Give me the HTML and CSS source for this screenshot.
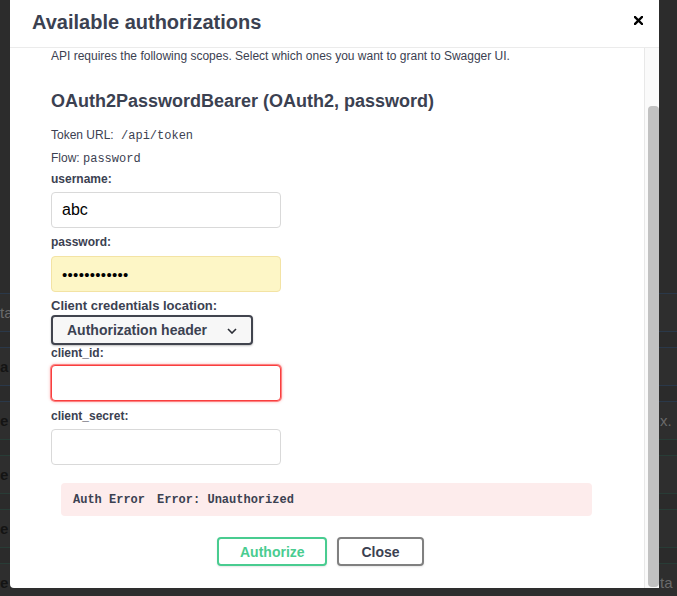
FILE: index.html
```html
<!DOCTYPE html>
<html lang="en">
<head>
<meta charset="utf-8">
<title>Available authorizations</title>
<link rel="stylesheet" href="styles.css">
</head>
<body>
<div class="page">
  <div class="row tall"><span class="lt dim">ta</span><span class="rt"></span></div>
  <div class="row short"></div>
  <div class="row tall"><span class="lt">a</span><span class="rt"></span></div>
  <div class="row short"></div>
  <div class="row tall"><span class="lt">e</span><span class="rt dim">x.</span></div>
  <div class="row short alt"></div>
  <div class="row tall alt"><span class="lt">e</span><span class="rt"></span></div>
  <div class="row short alt"></div>
  <div class="row tall alt"><span class="lt">e</span><span class="rt"></span></div>
  <div class="row short alt"></div>
  <div class="row tall alt"><span class="lt">e</span><span class="rt dim">ta</span></div>
</div>

<div class="modal">
  <div class="modal-header">
    <h3 class="modal-title">Available authorizations</h3>
    <button class="close-modal" aria-label="Close">
      <svg width="9" height="9" viewBox="0 0 9 9"><path d="M1 1 L8 8 M8 1 L1 8" stroke="#000" stroke-width="2.4" stroke-linecap="square" fill="none"/></svg>
    </button>
  </div>
  <div class="modal-body">
    <div class="modal-content">
      <p class="desc">API requires the following scopes. Select which ones you want to grant to Swagger UI.</p>
      <h4 class="scheme">OAuth2PasswordBearer (OAuth2, password)</h4>
      <p class="info first">Token URL: <code class="token">/api/token</code></p>
      <p class="info">Flow: <code>password</code></p>
      <label class="lbl l-user">username:</label>
      <div class="field">abc</div>
      <label class="lbl">password:</label>
      <div class="field autofill"><span class="dots">••••••••••••</span></div>
      <label class="lbl l-loc">Client credentials location:</label>
      <div class="select">
        <span>Authorization header</span>
        <svg width="10" height="6" viewBox="0 0 10 6"><path d="M1 1 L5 5 L9 1" stroke="#2b2e36" stroke-width="1.6" fill="none"/></svg>
      </div>
      <label class="lbl l-cid">client_id:</label>
      <div class="field invalid"></div>
      <label class="lbl l-sec">client_secret:</label>
      <div class="field"></div>
      <div class="errors"><b>Auth Error</b><b>Error: Unauthorized</b></div>
      <div class="btn-wrap">
        <button class="btn authorize">Authorize</button>
        <button class="btn close">Close</button>
      </div>
    </div>
    <div class="scrollbar"><div class="thumb"></div></div>
  </div>
</div>
</body>
</html>
```

FILE: styles.css
```css
* { box-sizing: border-box; }
html, body { margin: 0; padding: 0; }
body {
  width: 677px;
  height: 596px;
  overflow: hidden;
  background: #2c2c2c;
  font-family: "Liberation Sans", Arial, sans-serif;
  position: relative;
}

/* page behind the overlay */
.page {
  padding-top: 293px;
  display: flex;
  flex-direction: column;
}
.row {
  display: flex;
  justify-content: space-between;
  align-items: center;
  border-top: 1px solid #2a3849;
  background: #2e2e2e;
}
.row.alt { border-top-color: #283c36; }
.row.tall { height: 38px; }
.row.short { height: 16px; background: #2b2b2b; }
.lt, .rt {
  font-size: 15px;
  font-weight: bold;
  color: #141414;
  width: 18px;
  white-space: nowrap;
}
.rt { padding-left: 1px; }
.dim { font-weight: normal; color: #6a6a6a; }

/* modal */
.modal {
  position: absolute;
  left: 10px;
  top: 0;
  width: 649px;
  height: 588px;
  background: #fff;
  border-radius: 0 0 4px 4px;
  display: flex;
  flex-direction: column;
  color: #3b4151;
}
.modal-header {
  height: 48px;
  border-bottom: 1px solid #ebebeb;
  display: flex;
  align-items: center;
  justify-content: space-between;
  padding: 0 16px 3px 22px;
  flex: none;
}
.modal-title {
  margin: 0;
  font-size: 20px;
  font-weight: bold;
  color: #3b4151;
}
.close-modal {
  border: 0;
  background: none;
  padding: 0;
  width: 9px;
  height: 9px;
  display: flex;
  margin-bottom: 3px;
}
.modal-body {
  flex: 1;
  display: flex;
  min-height: 0;
}
.modal-content {
  flex: 1;
  padding: 1px 0 0 41px;
  display: flex;
  flex-direction: column;
  align-items: flex-start;
}
.scrollbar {
  width: 15px;
  flex: none;
  background: #fafafa;
  border-left: 1px solid #e8e8e8;
  padding: 58px 0 1px 3px;
  display: flex;
}
.thumb {
  width: 8px;
  flex: 1;
  background: #c1c1c1;
  border-radius: 4px;
}

.desc {
  margin: 0;
  font-size: 12px;
  line-height: 15px;
}
.scheme {
  margin: 26px 0 0;
  font-size: 18px;
  line-height: 22px;
  font-weight: bold;
}
.info {
  margin: 7px 0 0;
  font-size: 12px;
  line-height: 15px;
}
.info.first { margin-top: 16px; }
code {
  font-family: "Liberation Mono", "Courier New", monospace;
  font-size: 12px;
  color: #3b4151;
}
.token { margin-left: 4px; }

.lbl {
  display: block;
  font-size: 12px;
  line-height: 15px;
  font-weight: bold;
  margin: 7px 0 6px;
}
.l-user { margin: 5px 0 5px; }
.l-loc { font-size: 13px; margin: 6px 0 0; }
.l-cid { margin: 1px 0 4px; }
.l-sec { margin: 8px 0 5px; }

.field {
  width: 230px;
  height: 36px;
  border: 1px solid #d9d9d9;
  border-radius: 4px;
  background: #fff;
  font-size: 16px;
  color: #000;
  padding: 0 10px;
  display: flex;
  align-items: center;
}
.field.autofill {
  background: #fdf6c6;
  border-color: #f3e3a4;
}
.dots { font-size: 15px; letter-spacing: 0.3px; }
.field.invalid {
  border-color: #f93e3e;
  box-shadow: 0 0 0 1px rgba(249, 62, 62, 0.55), 0 0 3px 1px rgba(249, 62, 62, 0.35);
}

.select {
  margin-top: 2px;
  width: 202px;
  height: 30px;
  border: 2px solid #41444e;
  border-radius: 4px;
  background: #f7f7f7;
  box-shadow: 0 1px 2px rgba(0, 0, 0, 0.25);
  display: flex;
  align-items: center;
  justify-content: space-between;
  padding: 0 14px 0 14px;
  font-size: 14px;
  font-weight: bold;
  color: #3b4151;
}
.select svg { margin-top: 2px; }

.errors {
  margin: 18px 0 0 10px;
  width: 531px;
  height: 33px;
  border-radius: 4px;
  background: #fdecec;
  display: flex;
  align-items: center;
  padding-left: 12px;
  gap: 12px;
  font-family: "Liberation Mono", "Courier New", monospace;
  font-size: 12px;
  color: #3b4151;
}

.btn-wrap {
  margin: 21px 0 0 166px;
  display: flex;
  gap: 10px;
}
.btn {
  height: 29px;
  padding: 0 21px;
  border-radius: 4px;
  background: #fff;
  font-family: "Liberation Sans", Arial, sans-serif;
  font-size: 14px;
  font-weight: bold;
  box-shadow: 0 1px 2px rgba(0, 0, 0, 0.1);
}
.btn.authorize {
  border: 2px solid #49cc90;
  color: #49cc90;
  width: 110px;
}
.btn.close {
  border: 2px solid #808080;
  color: #3b4151;
  width: 87px;
}
```
